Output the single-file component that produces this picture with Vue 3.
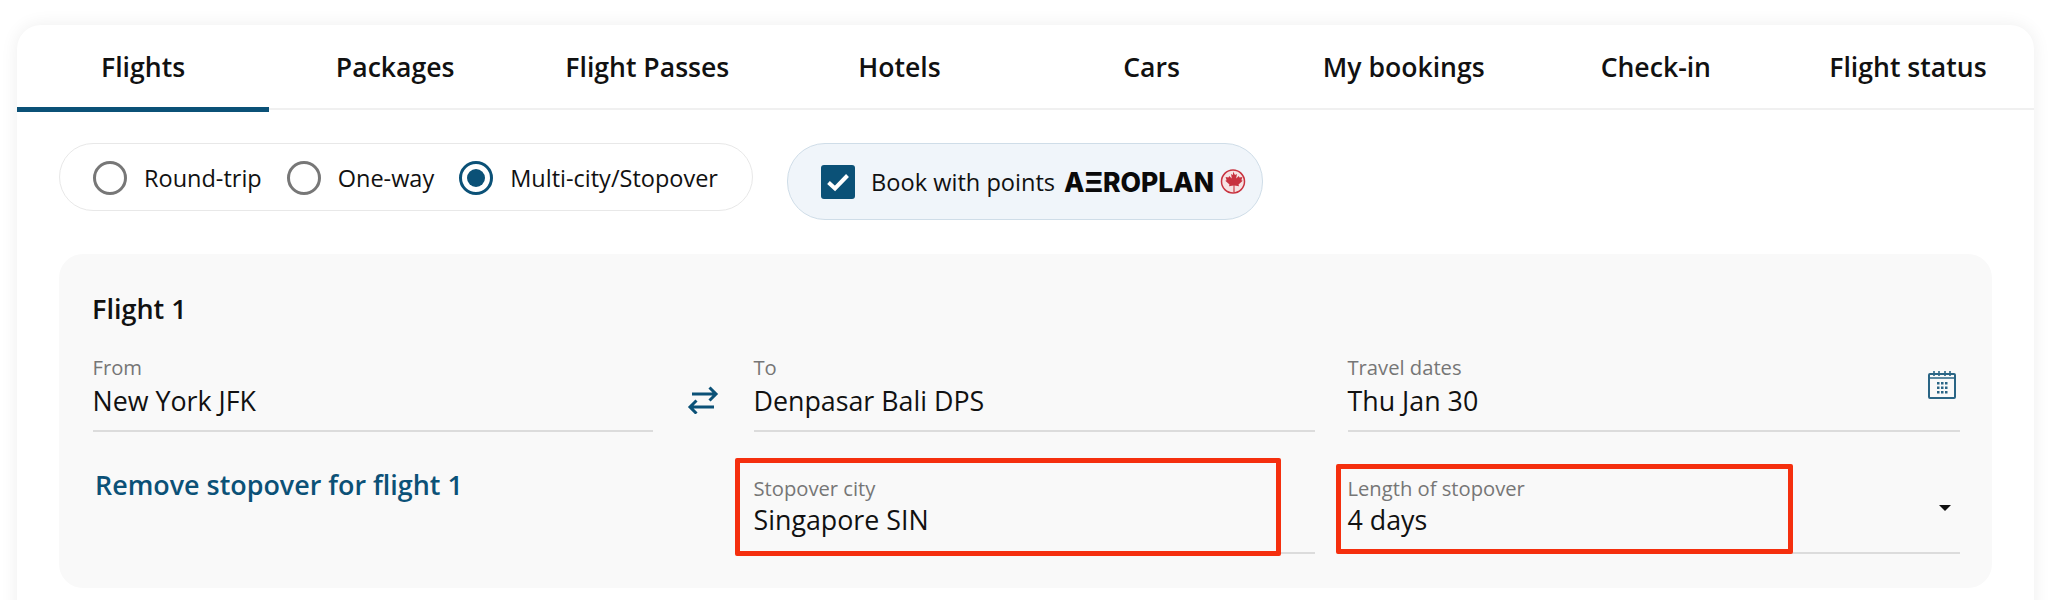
<script setup>
const tabs = ['Flights', 'Packages', 'Flight Passes', 'Hotels', 'Cars', 'My bookings', 'Check-in', 'Flight status']
const trips = [
  { label: 'Round-trip', on: false },
  { label: 'One-way', on: false },
  { label: 'Multi-city/Stopover', on: true }
]
</script>

<template>
  <div class="page">
    <main class="card">
      <nav class="tabs">
        <a v-for="(t, i) in tabs" :key="t" class="tab" :class="{ active: i === 0 }">{{ t }}</a>
      </nav>

      <div class="options">
        <div class="trip-pill">
          <label v-for="t in trips" :key="t.label" class="trip">
            <span class="radio" :class="{ on: t.on }"></span>
            <span>{{ t.label }}</span>
          </label>
        </div>
        <div class="points-pill">
          <span class="check">
            <svg viewBox="0 0 34 34" width="34" height="34"><path d="M7.500 17.500l6.500 6L26.500 10.500" fill="none" stroke="#fff" stroke-width="4"/></svg>
          </span>
          <span class="points-text">Book with points</span>
          <span class="aero">AΞROPLAN</span>
          <svg class="leaf" viewBox="0 0 26 26" width="26" height="26">
            <circle cx="13" cy="12.500" r="11.500" fill="#f6e3e3" stroke="#c8323f" stroke-width="1.500"/>
            <path d="M13 2.500l2 3.600 1.900-1-.7 4.500 2.600-2.600.7 1.600 2.900-.5-1 3.100 1.300.6-4.200 3.700.5 1.700-4.500-.6.100 6.400h-1.200l.1-6.400-4.500.6.5-1.700-4.200-3.700 1.300-.6-1-3.100 2.900.5.7-1.600 2.600 2.600-.7-4.500 1.900 1z" fill="#c8323f"/>
          </svg>
        </div>
      </div>

      <section class="panel">
        <h2 class="title">Flight 1</h2>
        <div class="grid">
          <div class="field from">
            <span class="label">From</span>
            <span class="value">New York JFK</span>
          </div>
          <div class="swap">
            <svg viewBox="0 0 32 28" width="32" height="28">
              <path d="M5 8h24M22.500 1.500L29 8l-6.500 6.500M27 21H3M9.500 14.500L3 21l6.500 6.500" fill="none" stroke="#0b5177" stroke-width="3"/>
            </svg>
          </div>
          <div class="field to">
            <span class="label">To</span>
            <span class="value">Denpasar Bali DPS</span>
          </div>
          <div class="field dates">
            <span class="label">Travel dates</span>
            <span class="value">Thu Jan 30</span>
            <svg class="cal" viewBox="0 0 28 28" width="28" height="28">
              <rect x="1" y="3" width="26" height="24" rx="1" fill="none" stroke="#2a6585" stroke-width="2"/>
              <path d="M1 7h26M6 0v5M11 0v5M17 0v5M22 0v5" fill="none" stroke="#2a6585" stroke-width="1.600"/>
              <path d="M9 11h2.500v2.500H9zM13 11h2.500v2.500H13zM17 11h2.500v2.500H17zM9 15.500h2.500V18H9zM13 15.500h2.500V18H13zM17 15.500h2.500V18H17zM9 20h2.500v2.500H9zM13 20h2.500v2.500H13zM17 20h2.500v2.500H17z" fill="#2a6585"/>
            </svg>
          </div>

          <a class="remove">Remove stopover for flight 1</a>
          <div class="field city low">
            <span class="label">Stopover city</span>
            <span class="value">Singapore SIN</span>
            <span class="mark mark-city"></span>
          </div>
          <div class="field length low">
            <span class="label">Length of stopover</span>
            <span class="value">4 days</span>
            <span class="caret"></span>
            <span class="mark mark-length"></span>
          </div>
        </div>
      </section>
    </main>
  </div>
</template>

<style>
html, body { margin: 0; background: #fff; }
</style>

<style scoped>
.page {
  height: 600px;
  overflow: hidden;
  padding: 25px 14px 0 17px;
  box-sizing: border-box;
  background: #fff;
  font-family: "Open Sans", "Noto Sans", sans-serif;
  color: #111;
}
.card {
  height: 640px;
  background: #fff;
  border-radius: 24px;
  box-shadow: 0 0 18px rgba(0, 0, 0, .07);
}
.tabs {
  display: grid;
  grid-template-columns: repeat(8, 1fr);
  height: 85px;
  box-sizing: border-box;
  border-bottom: 2px solid #f0f0f0;
}
.tab {
  position: relative;
  display: flex;
  align-items: center;
  justify-content: center;
  padding-top: 1px;
  font-size: 26.600px;
  font-weight: 600;
}
.tab.active::after {
  content: "";
  position: absolute;
  left: 0;
  right: 0;
  bottom: -4px;
  height: 5px;
  background: #0b5177;
}
.options {
  display: flex;
  align-items: flex-start;
  gap: 34px;
  margin: 33px 0 34px 42px;
}
.trip-pill {
  display: flex;
  align-items: center;
  gap: 25px;
  width: 694px;
  height: 68px;
  box-sizing: border-box;
  padding: 2px 0 0 33px;
  border: 1px solid #e8e8e8;
  border-radius: 34px;
  font-size: 23.500px;
}
.trip {
  display: flex;
  align-items: center;
  gap: 17px;
}
.radio {
  position: relative;
  width: 34px;
  height: 34px;
  box-sizing: border-box;
  border: 3px solid #777;
  border-radius: 50%;
  background: #fff;
}
.radio.on { border-color: #0b5177; }
.radio.on::after {
  content: "";
  position: absolute;
  inset: 5px;
  border-radius: 50%;
  background: #0b5177;
}
.points-pill {
  display: flex;
  align-items: center;
  width: 476px;
  height: 77px;
  box-sizing: border-box;
  padding-left: 33px;
  background: #f0f5fa;
  border: 1px solid #cfdde8;
  border-radius: 38px;
  font-size: 23.600px;
}
.check {
  display: flex;
  width: 34px;
  height: 34px;
  background: #0b5177;
  border-radius: 3px;
}
.points-text { margin-left: 16px; }
.aero {
  margin-left: 9px;
  font-family: Inter, "Open Sans", sans-serif;
  font-weight: 800;
  font-size: 26.500px;
  color: #0a0a0a;
}
.leaf { margin-left: 6px; }
.panel {
  height: 334px;
  margin: 0 42px;
  box-sizing: border-box;
  padding: 39px 32px 0 33.500px;
  background: #f9f9f9;
  border-radius: 24px;
}
.title {
  margin: 0 0 0 -.5px;
  font-size: 27px;
  font-weight: 600;
  line-height: 32px;
}
.grid {
  display: grid;
  grid-template-columns: 560px 101px 561px 33px 612px;
  grid-template-rows: 82px 82px;
  row-gap: 40px;
  margin-top: 25px;
}
.field {
  position: relative;
  display: flex;
  flex-direction: column;
  border-bottom: 2px solid #dcdcdc;
}
.from { grid-column: 1; grid-row: 1; }
.swap { grid-column: 2; grid-row: 1; display: flex; justify-content: center; padding-top: 36px; margin-left: -1px; }
.to { grid-column: 3; grid-row: 1; }
.dates { grid-column: 5; grid-row: 1; }
.remove {
  grid-column: 1;
  grid-row: 2;
  align-self: start;
  margin: -3px 0 0 2.500px;
  font-size: 26.900px;
  font-weight: 600;
  color: #0b5177;
  line-height: 32px;
}
.city { grid-column: 3; grid-row: 2; }
.length { grid-column: 5; grid-row: 2; }
.label {
  margin-top: 5.400px;
  font-size: 20.200px;
  line-height: 24px;
  color: #767676;
}
.value {
  margin-top: 3.600px;
  font-size: 26.800px;
  line-height: 36px;
  color: #111;
}
.low .label { margin-top: 4px; }
.low .value { margin-top: 2.400px; }
.cal { position: absolute; right: 4px; top: 21px; }
.caret {
  position: absolute;
  right: 9px;
  top: 33px;
  border-left: 6.500px solid transparent;
  border-right: 6.500px solid transparent;
  border-top: 6.500px solid #111;
}
.mark {
  position: absolute;
  box-sizing: border-box;
  border: 5.500px solid #f52f0e;
  border-radius: 2px;
}
.mark-city { left: -19px; top: -14px; width: 546px; height: 98px; }
.mark-length { left: -12px; top: -8px; width: 457px; height: 90px; }
</style>
